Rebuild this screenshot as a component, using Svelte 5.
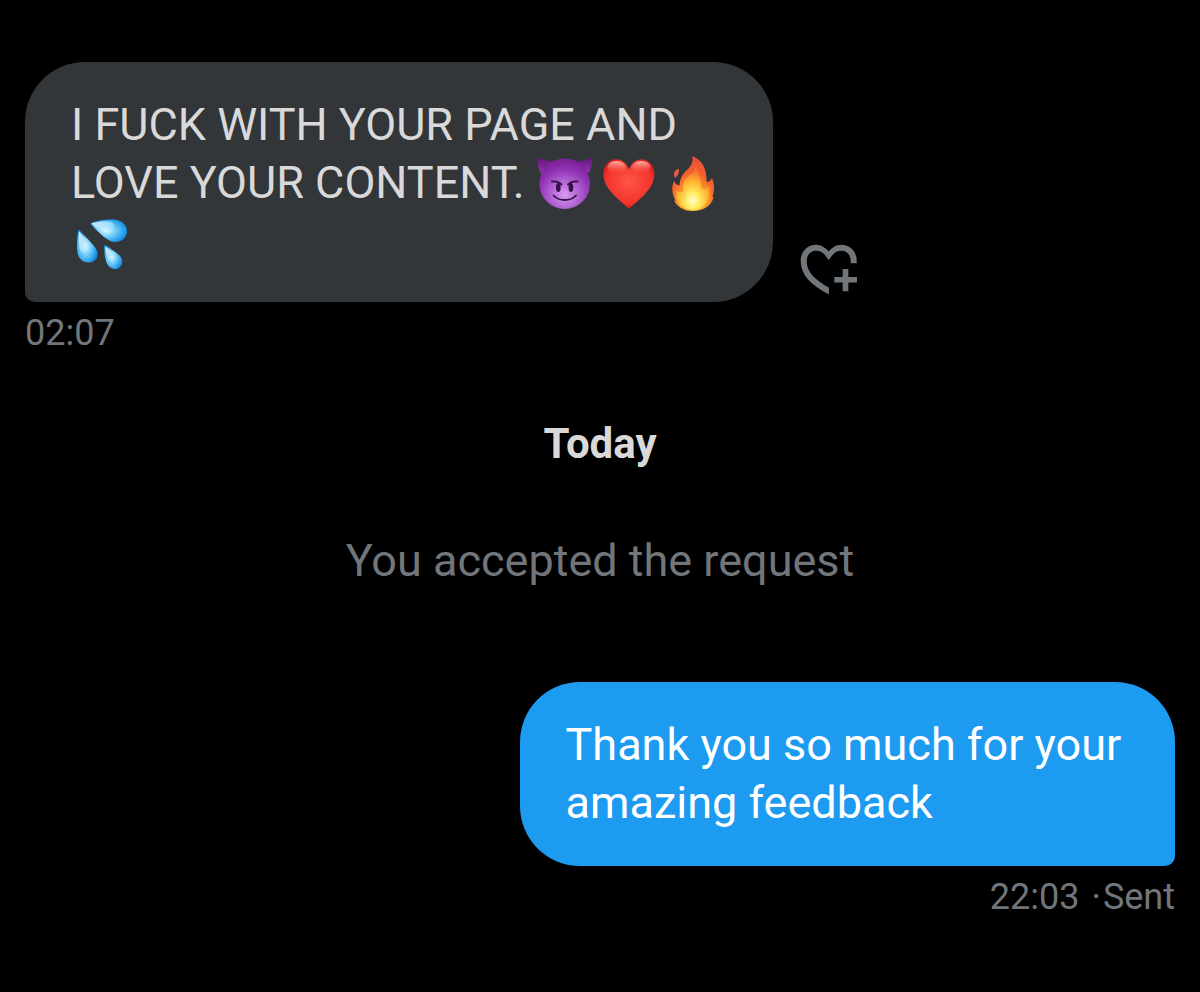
<script lang="ts">
  type Emoji = 'devil' | 'heart' | 'fire' | 'sweat';

  const received = {
    text: 'I FUCK WITH YOUR PAGE AND LOVE YOUR CONTENT.',
    emojis: ['devil', 'heart', 'fire', 'sweat'] as Emoji[],
    time: '02:07'
  };

  const sent = {
    text: 'Thank you so much for your amazing feedback',
    time: '22:03',
    status: 'Sent'
  };
</script>

{#snippet emoji(name: Emoji)}
  <svg class="emoji" viewBox="0 0 64 58" role="img" aria-label={name}>
    {#if name === 'devil'}
      <defs>
        <radialGradient id="devil-face" cx="0.5" cy="0.72" r="0.68">
          <stop offset="0" stop-color="#d79af0" />
          <stop offset="0.4" stop-color="#b264d4" />
          <stop offset="0.75" stop-color="#9132b5" />
          <stop offset="1" stop-color="#7b2399" />
        </radialGradient>
        <linearGradient id="devil-horn" x1="0" y1="0" x2="0" y2="1">
          <stop offset="0" stop-color="#5a1570" />
          <stop offset="1" stop-color="#9a35b5" />
        </linearGradient>
      </defs>
      <path fill="url(#devil-horn)" d="M5 2.5C3.6 8 4.5 15 9 20L24 7C17 7.5 9 6.5 5 2.5Z" />
      <path fill="url(#devil-horn)" d="M58.5 2.5C60 8 59 15 54.5 20L39.5 7C46.5 7.5 54.5 6.5 58.5 2.5Z" />
      <circle cx="31.7" cy="29.7" r="25.3" fill="url(#devil-face)" />
      <ellipse cx="25.3" cy="33.5" rx="2.3" ry="4.5" fill="#35104a" />
      <ellipse cx="37.9" cy="33.5" rx="2.3" ry="4.5" fill="#35104a" />
      <g fill="none" stroke="#35104a" stroke-width="1.8" stroke-linecap="round">
        <path d="M19 27.5C22.5 27 26 28 28.5 30.5" />
        <path d="M44.5 27.5C41 27 37.5 28 35 30.5" />
        <path d="M20.5 41.5C26 47.5 37.5 47.5 43 41.5" />
      </g>
    {:else if name === 'heart'}
      <defs>
        <radialGradient id="heart-fill" cx="0.5" cy="0.45" r="0.62">
          <stop offset="0" stop-color="#ff5547" />
          <stop offset="0.7" stop-color="#f4352c" />
          <stop offset="1" stop-color="#bd1017" />
        </radialGradient>
        <linearGradient id="heart-shine" x1="0" y1="0" x2="0" y2="1">
          <stop offset="0" stop-color="#ffc0b5" stop-opacity="0.9" />
          <stop offset="1" stop-color="#ff6a5c" stop-opacity="0" />
        </linearGradient>
      </defs>
      <path
        fill="url(#heart-fill)"
        d="M32 15.5C29.5 9 25 5.3 19.5 5.3C12 5.3 6.3 11.5 6.3 20C6.3 34 20 44 32 54.7C44 44 57.5 34 57.5 20C57.5 11.5 52 5.3 44.5 5.3C39 5.3 34.5 9 32 15.5Z"
      />
      <ellipse cx="19.5" cy="13" rx="9" ry="6" fill="url(#heart-shine)" />
      <ellipse cx="44.5" cy="13" rx="9" ry="6" fill="url(#heart-shine)" />
    {:else if name === 'fire'}
      <defs>
        <radialGradient id="fire-outer" cx="0.5" cy="0.85" r="0.8">
          <stop offset="0" stop-color="#ffd83c" />
          <stop offset="0.4" stop-color="#ff9a2b" />
          <stop offset="0.7" stop-color="#f4602c" />
          <stop offset="1" stop-color="#e8503a" />
        </radialGradient>
        <radialGradient id="fire-inner" cx="0.5" cy="0.78" r="0.7">
          <stop offset="0" stop-color="#fffbd0" />
          <stop offset="0.25" stop-color="#ffee66" />
          <stop offset="0.65" stop-color="#ffb52e" />
          <stop offset="1" stop-color="#ff8030" stop-opacity="0.5" />
        </radialGradient>
      </defs>
      <path
        fill="url(#fire-outer)"
        d="M31.5 2C42 7 46 15 45.5 28C48.5 28 49.5 26.5 51 24C53.5 30 53.7 37 51.5 42L52.5 44C50 52 42 57 32 57C22 57 15 52 13 46L15 47C11 41 10 33 13 27C14.5 30 16 31 18.5 31.5C19 24 21.5 20 27 15C31 11 32 7 31.5 2Z"
      />
      <path
        fill="url(#fire-inner)"
        d="M34 13C39 19 40 26 40 34C43 36 46 35 48 32C50 44 46 55 32 56C18 55 13 45 15.5 36C18 39 20 39 22.5 37C21 28 24 25 29 21C32.5 18.5 34 16 34 13Z"
      />
      <path fill="#e45a46" d="M17.5 14.5C12.5 17 12 20 14 24C18 20.5 18.5 17.5 17.5 14.5Z" />
    {:else}
      <defs>
        <radialGradient id="drop-fill" cx="0.42" cy="0.5" r="0.6">
          <stop offset="0" stop-color="#d5f5ff" />
          <stop offset="0.4" stop-color="#7bd1fb" />
          <stop offset="0.8" stop-color="#30a4ee" />
          <stop offset="1" stop-color="#1388d9" />
        </radialGradient>
        <linearGradient id="drop-shine" x1="0" y1="0" x2="1" y2="1">
          <stop offset="0" stop-color="#ffffff" stop-opacity="0.9" />
          <stop offset="1" stop-color="#b5ecff" stop-opacity="0" />
        </linearGradient>
      </defs>
      <g fill="url(#drop-fill)">
        <path d="M19.8 11C28 8 36 7 43 7.5C51 8 56 13 56 19C56 26 50 30.5 43.5 30C37 29.5 29 22 20 12.5Z" />
        <path d="M8.2 18C14 24 20 30 24.5 36C28.5 41.5 26.5 48 21 50C14.5 52 7.5 48 6.5 41C5.5 34 6 26 7 18.2Z" />
        <path d="M34 33C39 36 44 39.5 48.5 43.5C53 48 52 54 47 56.5C42 58.5 36.5 55 35 49C33.5 43.5 33 38 33.2 33Z" />
      </g>
      <g fill="url(#drop-shine)">
        <path d="M20.5 11.5C28 9.5 35 9 41 10C45 13 43 20 39 23.5C33 21.5 27 17 20.5 11.5Z" />
        <path d="M8 19.5C13 26 18 31 20 37C17 42 11 42 9 38C7.5 32 7.5 26 8 19.5Z" />
        <path d="M34.2 34.5C39 38 43 41 45 45.5C43.5 49 39 50 37 47C35 42.5 34.5 38 34.2 34.5Z" />
      </g>
    {/if}
  </svg>
{/snippet}

<main class="conversation">
  <section class="message received">
    <div class="row">
      <p class="bubble">
        {received.text}<span class="emojis">{#each received.emojis as name}{@render emoji(name)}<wbr />{/each}</span>
      </p>
      <button class="react" type="button" aria-label="Add reaction">
        <svg viewBox="0 0 58 52" aria-hidden="true">
          <path
            d="M56.7 19.3V17C56.7 7 49.5 0.7 41.5 0.7C36 0.7 32 3.5 28.7 7.5C25.4 3.5 21 0.7 16 0.7C7.5 0.7 0.7 7.5 0.7 17C0.7 31 11 41.5 29 50.3V43.7C14.5 35.5 6.7 28 6.7 17C6.7 11 10.5 6.7 16 6.7C20.5 6.7 23.5 8.5 26 12.5L28.7 16L31.4 12.5C34 8.5 37 6.7 41.5 6.7C47 6.7 50.7 11 50.7 17V19.3Z"
          />
          <path d="M42.7 25H48.3V33H57V38.6H48.3V47.2H42.7V38.6H34.3V33H42.7Z" />
        </svg>
      </button>
    </div>
    <time class="meta">{received.time}</time>
  </section>

  <h2 class="day">Today</h2>
  <p class="notice">You accepted the request</p>

  <section class="message sent">
    <div class="row">
      <p class="bubble">{sent.text}</p>
    </div>
    <div class="meta">
      <time>{sent.time}</time>
      <span class="status"><span>·</span><span>{sent.status}</span></span>
    </div>
  </section>
</main>

<style>
  :global(body) {
    background: #000;
  }

  .conversation {
    display: flex;
    flex-direction: column;
    padding: 62px 25px;
    color: #d9d9d9;
    font-family: Roboto, 'Liberation Sans', sans-serif;
    font-size: 45px;
    line-height: 58px;
  }

  .message {
    display: flex;
    flex-direction: column;
  }

  .row {
    display: flex;
    align-items: flex-end;
    gap: 27px;
  }

  .bubble {
    box-sizing: border-box;
    margin: 0;
    padding: 34px 46px;
  }

  .received .bubble {
    max-width: 65%;
    padding-bottom: 32px;
    background: #323639;
    border-radius: 60px 60px 60px 10px;
  }

  .sent {
    align-items: flex-end;
  }

  .sent .row {
    width: 100%;
    justify-content: flex-end;
  }

  .sent .bubble {
    max-width: 57%;
    color: #fff;
    background: #1d9bf0;
    border-radius: 60px 60px 10px 60px;
  }

  .emojis {
    margin-left: 8px;
  }

  .emoji {
    width: 64px;
    height: 58px;
    vertical-align: top;
  }

  .react {
    flex: none;
    padding: 0 0 6px;
    border: none;
    background: none;
    cursor: pointer;
  }

  .react svg {
    display: block;
    width: 58px;
    height: 52px;
    fill: #71767b;
  }

  .meta {
    display: flex;
    gap: 12px;
    padding-top: 8px;
    color: #71767b;
    font-size: 36px;
    line-height: 46px;
  }

  .status {
    display: flex;
    gap: 2px;
  }

  .day {
    margin: 59px 0;
    font-size: 42px;
    font-weight: 700;
    text-align: center;
  }

  .notice {
    margin: 0 0 92px;
    color: #71767b;
    text-align: center;
  }
</style>
